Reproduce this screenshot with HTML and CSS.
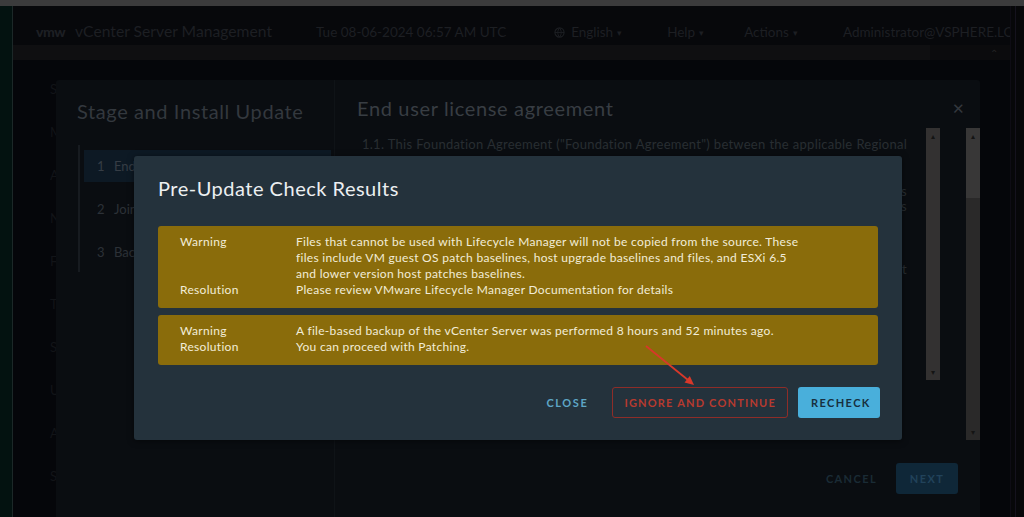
FILE: index.html
```html
<!DOCTYPE html>
<html lang="en">
<head>
<meta charset="utf-8">
<title>vCenter Server Management - Pre-Update Check Results</title>
<link rel="stylesheet" href="styles.css">
</head>
<body>
<div class="screen">
  <div class="topstrip"></div>
  <div class="main">
    <div class="edge"></div>
    <div class="app">
      <header class="hdr">
        <span class="logo">vmw</span>
        <span class="product">vCenter Server Management</span>
        <span class="date">Tue 08-06-2024 06:57 AM UTC</span>
        <span class="menu lang"><svg class="globe" viewBox="0 0 12 12" width="11" height="11"><circle cx="6" cy="6" r="5" fill="none" stroke="currentColor" stroke-width="1.2"/><path d="M1 6h10M6 1c-2.5 3-2.5 7 0 10M6 1c2.5 3 2.5 7 0 10" fill="none" stroke="currentColor" stroke-width="1"/></svg>English <span class="car">&#9662;</span></span>
        <span class="menu help">Help <span class="car">&#9662;</span></span>
        <span class="menu actions">Actions <span class="car">&#9662;</span></span>
        <span class="menu user">Administrator@VSPHERE.LOCAL <span class="car">&#9662;</span></span>
      </header>
      <div class="subbar"><span class="sq"></span><span class="fill"></span><span class="caret">&#8963;</span></div>
      <div class="page">
        <nav class="side">
          <div class="side-item">Summary</div>
          <div class="side-item">Monitor</div>
          <div class="side-item">Access</div>
          <div class="side-item">Networking</div>
          <div class="side-item">Firewall</div>
          <div class="side-item">Time</div>
          <div class="side-item">Services</div>
          <div class="side-item">Update</div>
          <div class="side-item">Administration</div>
          <div class="side-item">Syslog</div>
        </nav>
      </div>
    </div>
    <div class="pscroll"><span class="pline"></span></div>
  </div>

  <div class="dialog">
    <div class="wiz-left">
      <h2 class="wiz-title">Stage and Install Update</h2>
      <ol class="steps">
        <li class="step active"><span class="num">1</span>End user license agreement</li>
        <li class="step"><span class="num">2</span>Join CEIP</li>
        <li class="step"><span class="num">3</span>Backup vCenter Server</li>
      </ol>
    </div>
    <div class="wiz-right">
      <div class="wiz-head">
        <h3 class="wiz-sub">End user license agreement</h3>
        <span class="x">&#10005;</span>
      </div>
      <div class="wiz-body">
        <div class="eula">
          <div class="eula-text">
            <div class="ln j">1.1. This Foundation Agreement ("Foundation Agreement") between the applicable Regional</div>
            <div class="ln">&nbsp;</div>
            <div class="ln">&nbsp;</div>
            <div class="ln j">1.2. Specific Terms. Additional terms that apply to specific Offerings and Services</div>
            <div class="ln j">are set out in the Specific Terms, and apply to the Customer's agreement as</div>
            <div class="ln">applicable.</div>
            <div class="ln">&nbsp;</div>
            <div class="ln">1.3. Order of Precedence. If there is any conflict between documents</div>
            <div class="ln j">that form the Agreement, the order of precedence between the parties is set</div>
            <div class="ln">out below.</div>
          </div>
          <div class="sbar inner"><span class="up">&#9652;</span><span class="dn">&#9662;</span></div>
        </div>
        <div class="sbar outer"><span class="thumb"></span><span class="up">&#9652;</span><span class="dn">&#9662;</span></div>
      </div>
      <div class="wiz-foot">
        <button class="fbtn cancel">Cancel</button>
        <button class="fbtn next">Next</button>
      </div>
    </div>
  </div>

  <div class="modal">
    <h1 class="m-title">Pre-Update Check Results</h1>
    <div class="warn">
      <div class="k">Warning</div>
      <div class="v">Files that cannot be used with Lifecycle Manager will not be copied from the source. These files include VM guest OS patch baselines, host upgrade baselines and files, and ESXi 6.5 and lower version host patches baselines.</div>
      <div class="k">Resolution</div>
      <div class="v">Please review VMware Lifecycle Manager Documentation for details</div>
    </div>
    <div class="warn">
      <div class="k">Warning</div>
      <div class="v">A file-based backup of the vCenter Server was performed 8 hours and 52 minutes ago.</div>
      <div class="k">Resolution</div>
      <div class="v">You can proceed with Patching.</div>
    </div>
    <div class="m-actions">
      <button class="btn link">Close</button>
      <button class="btn danger">Ignore and continue</button>
      <button class="btn primary">Recheck</button>
    </div>
  </div>

  <svg class="arrow" width="1024" height="517" viewBox="0 0 1024 517">
    <line x1="646" y1="346" x2="688" y2="380" stroke="#d8382a" stroke-width="1.8"/>
    <polygon points="694,385 684.5,382.5 689.8,376" fill="#d8382a"/>
  </svg>
</div>
</body>
</html>
```

FILE: styles.css
```css
* { box-sizing: border-box; }
html, body { margin: 0; padding: 0; background: #060709; }
body { font-family: Lato, "Noto Sans", sans-serif; }

.screen {
  position: relative;
  width: 1024px;
  height: 517px;
  overflow: hidden;
  background: #060709;
}

.topstrip { height: 6px; background: #3b3b3c; }

.main { display: flex; height: 511px; }
.edge { width: 13px; background: #031210; border-right: 1px solid #1c2828; }
.app { flex: 1; display: flex; flex-direction: column; min-width: 0; background: #05060a; }
.pscroll { width: 14px; background: #070709; position: relative; border-left: 1px solid #0e0c14; }
.pline { position: absolute; right: 8px; top: 0; bottom: 0; width: 1px; background: #15121d; }

.hdr {
  height: 39px;
  display: flex;
  align-items: flex-end;
  padding: 0 0 5px 23px;
  background: #07080b;
  color: #1d1f23;
  font-size: 14px;
  white-space: nowrap;
  overflow: hidden;
}
.logo { font-weight: 900; font-size: 14px; letter-spacing: -0.5px; width: 29px; }
.product { margin-left: 10px; font-size: 15.7px; }
.date { margin-left: 44px; font-size: 13.5px; }
.menu { font-size: 13.5px; display: inline-flex; align-items: center; gap: 4px; }
.lang { margin-left: 48px; }
.help { margin-left: 45px; }
.actions { margin-left: 40px; }
.user { margin-left: 45px; }
.car { font-size: 9px; }
.globe { margin-right: 2px; }

.subbar { height: 15px; display: flex; align-items: center; background: #0b0b0d; }
.sq { width: 10px; height: 8px; background: #19191b; margin-left: 6px; }
.fill { flex: 1; height: 15px; background: #0f0f11; margin-left: -16px; max-width: 917px; }
.caret { margin-left: auto; margin-right: 12px; color: #232325; font-size: 10px; }

.page { flex: 1; position: relative; }
.side { padding: 8px 0 0 37px; }
.side-item { height: 43px; line-height: 43px; font-size: 13px; color: #121418; }

/* Stage and Install dialog (behind overlay) */
.dialog {
  position: absolute;
  left: 56px;
  top: 80px;
  width: 924px;
  height: 460px;
  background: #0a0d11;
  border-radius: 3px;
  display: flex;
}
.wiz-left { width: 279px; border-right: 1px solid #0f1317; padding: 18px 0 0 21px; }
.wiz-title { margin: 0; font-size: 20px; font-weight: 400; letter-spacing: 0.6px; line-height: 26px; color: #33383e; white-space: nowrap; }
.steps { list-style: none; margin: 21px 0 0 1px; padding: 5px 0 4px; border-left: 2px solid #171b20; }
.step { height: 32px; display: flex; align-items: center; padding-left: 13px; font-size: 13px; color: #2c3137; white-space: nowrap; margin-bottom: 11px; margin-left: 4px; margin-right: 3px; }
.step:last-child { margin-bottom: 0; }
.step.active { background: #0d1924; color: #363d45; }
.num { width: 17px; }

.wiz-right { flex: 1; display: flex; flex-direction: column; padding-left: 22px; }
.wiz-head { display: flex; align-items: center; justify-content: space-between; height: 28px; margin-top: 14px; padding-right: 15px; }
.wiz-sub { margin: 0; font-size: 20px; font-weight: 400; letter-spacing: 0.65px; color: #383d43; white-space: nowrap; }
.x { color: #33373d; font-size: 15px; }
.wiz-body { display: flex; margin-top: 6px; }
.eula { display: flex; width: 583px; height: 252px; }
.eula-text { flex: 1; padding: 9px 0 0 5px; overflow: hidden; }
.ln { width: 545px; font-size: 13px; letter-spacing: 0.25px; line-height: 15.6px; color: #282d32; white-space: nowrap; }
.ln.j { text-align: justify; text-align-last: justify; }
.sbar { width: 14px; background: #2f2e2e; position: relative; }
.sbar .up, .sbar .dn { position: absolute; left: 0; width: 14px; text-align: center; font-size: 8px; color: #141414; line-height: 10px; }
.sbar .up { top: 3px; }
.sbar .dn { bottom: 3px; }
.sbar.inner { height: 252px; background: #333131; }
.sbar.outer { height: 312px; margin-left: 26px; background: #2a2929; }
.sbar .thumb { position: absolute; left: 0; right: 0; top: 0; height: 70px; background: #383737; }

.wiz-foot { display: flex; justify-content: flex-end; gap: 6px; margin-top: 23px; padding-right: 22px; }
.fbtn { height: 31px; border: 0; border-radius: 3px; font-family: inherit; font-size: 11px; font-weight: 700; letter-spacing: 1.4px; text-transform: uppercase; padding: 0 13px; }
.cancel { background: transparent; color: #1a2b35; }
.next { background: #0f2738; color: #21425a; width: 62px; }

/* Pre-Update modal */
.modal {
  position: absolute;
  left: 134px;
  top: 156px;
  width: 768px;
  height: 284px;
  background: #24323c;
  border-radius: 3px;
  padding: 20px 24px 22px 24px;
  box-shadow: 0 1px 6px rgba(0,0,0,0.5);
}
.m-title { margin: 0 0 26px; font-size: 20px; font-weight: 400; letter-spacing: 0.5px; line-height: 24px; color: #eceff1; }
.warn {
  background: #8a6c0b;
  border-radius: 3px;
  padding: 8px 22px 10px;
  display: grid;
  grid-template-columns: 116px 512px;
  font-size: 12px;
  letter-spacing: 0.3px;
  line-height: 16px;
  color: #f2ecd8;
  margin-bottom: 7px;
}
.warn:last-of-type { margin-bottom: 0; }
.m-actions { display: flex; justify-content: flex-end; align-items: center; gap: 10px; margin-top: 22px; margin-right: -2px; }
.btn {
  height: 31px;
  border-radius: 3px;
  font-family: inherit;
  font-size: 11px;
  font-weight: 700;
  letter-spacing: 1.4px;
  text-transform: uppercase;
  padding: 0 12px;
  border: 1px solid transparent;
  background: transparent;
  white-space: nowrap;
}
.btn.link { color: #5ea6c6; margin-right: 1px; letter-spacing: 1.6px; }
.btn.danger { color: #b73a2f; border-color: #8e2d28; padding: 0 11px; letter-spacing: 1.2px; }
.btn.primary { background: #49afdb; color: #173040; width: 82px; }

.arrow { position: absolute; left: 0; top: 0; pointer-events: none; }
```
